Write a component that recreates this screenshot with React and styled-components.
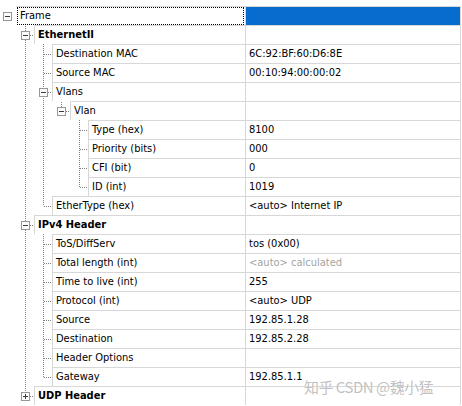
import React from 'react';
import styled, { createGlobalStyle } from 'styled-components';

const GlobalStyle = createGlobalStyle`
  html, body {
    margin: 0;
    padding: 0;
    background: #fff;
  }
  body {
    font-family: "DejaVu Sans Condensed", "DejaVu Sans", "Liberation Sans", sans-serif;
    font-size: 11px;
    color: #000;
  }
`;

const ROW_H = 19;
const STEP = 18;
const DOT = '#7f7f7f';
const GRID = '#d7d7d7';

const rows = [
  { level: 0, label: 'Frame', open: true, selected: true },
  { level: 1, label: 'EthernetII', open: true, bold: true },
  { level: 2, label: 'Destination MAC', value: '6C:92:BF:60:D6:8E' },
  { level: 2, label: 'Source MAC', value: '00:10:94:00:00:02' },
  { level: 2, label: 'Vlans', open: true },
  { level: 3, label: 'Vlan', open: true },
  { level: 4, label: 'Type (hex)', value: '8100' },
  { level: 4, label: 'Priority (bits)', value: '000' },
  { level: 4, label: 'CFI (bit)', value: '0' },
  { level: 4, label: 'ID (int)', value: '1019' },
  { level: 2, label: 'EtherType (hex)', value: '<auto> Internet IP' },
  { level: 1, label: 'IPv4 Header', open: true, bold: true },
  { level: 2, label: 'ToS/DiffServ', value: 'tos (0x00)' },
  { level: 2, label: 'Total length (int)', value: '<auto> calculated', muted: true },
  { level: 2, label: 'Time to live (int)', value: '255' },
  { level: 2, label: 'Protocol (int)', value: '<auto> UDP' },
  { level: 2, label: 'Source', value: '192.85.1.28' },
  { level: 2, label: 'Destination', value: '192.85.2.28' },
  { level: 2, label: 'Header Options', value: '' },
  { level: 2, label: 'Gateway', value: '192.85.1.1' },
  { level: 1, label: 'UDP Header', open: false, bold: true, branch: true },
];

// does row i have a later sibling on the same level
function hasNext(i) {
  const lv = rows[i].level;
  for (let j = i + 1; j < rows.length; j++) {
    if (rows[j].level < lv) return false;
    if (rows[j].level === lv) return true;
  }
  return false;
}

function ancestorOf(i, lv) {
  for (let j = i - 1; j >= 0; j--) {
    if (rows[j].level === lv) return j;
  }
  return -1;
}

const Grid = styled.div`
  position: relative;
  width: 461px;
  padding-top: 6px;
`;

const Row = styled.div`
  display: grid;
  grid-template-columns: 245px 216px;
  height: ${ROW_H}px;
`;

const TreePart = styled.div`
  display: flex;
  min-width: 0;
`;

const Label = styled.div`
  position: relative;
  flex: 1;
  min-width: 0;
  box-sizing: border-box;
  border-top: 1px solid ${GRID};
  border-left: 1px solid ${GRID};
  padding-left: 3px;
  line-height: 18px;
  white-space: nowrap;
  font-weight: ${(p) => (p.$bold ? 700 : 400)};

  ${(p) =>
    p.$selected &&
    `
    border-left-color: transparent;
    &::after {
      content: '';
      position: absolute;
      left: 0;
      top: 0;
      right: 1px;
      bottom: 0;
      border: 1px dotted #000;
    }
  `}
`;

const Value = styled.div`
  box-sizing: border-box;
  border-top: 1px solid ${GRID};
  border-left: 1px solid ${GRID};
  border-right: 1px solid ${GRID};
  padding-left: 3px;
  line-height: 18px;
  white-space: nowrap;
  overflow: hidden;
  color: ${(p) => (p.$muted ? '#a3a3a3' : '#000')};
  background: ${(p) => (p.$selected ? '#066dcf' : 'transparent')};
`;

const Watermark = styled.div`
  position: absolute;
  left: 304px;
  top: 376px;
  font-family: "Noto Sans CJK SC", "DejaVu Sans", sans-serif;
  font-size: 15px;
  letter-spacing: -0.5px;
  color: rgba(140, 140, 140, 0.55);
  text-shadow: 0 0 1px rgba(255, 255, 255, 0.9);
  white-space: nowrap;
  pointer-events: none;
`;

function GutterCell({ width, vFull, vTop, vBottom, hLine, toggle, phase }) {
  return (
    <svg width={width} height={ROW_H} style={{ display: 'block', flex: 'none' }}>
      <g stroke={DOT} strokeWidth="1" strokeDasharray="1 1" strokeDashoffset={phase} shapeRendering="crispEdges">
        {vFull && <line x1="7.5" y1="0" x2="7.5" y2={ROW_H} />}
        {vTop && <line x1="7.5" y1="0" x2="7.5" y2="10" />}
        {vBottom && <line x1="7.5" y1="10" x2="7.5" y2={ROW_H} />}
      </g>
      {hLine && (
        <line x1="8" y1="10.5" x2={width} y2="10.5" stroke={DOT} strokeDasharray="1 1" shapeRendering="crispEdges" />
      )}
      {toggle && (
        <g shapeRendering="crispEdges">
          <rect x="3.5" y="6.5" width="8" height="8" fill="#fbfbfb" stroke="#979797" />
          <line x1="5" y1="10.5" x2="10" y2="10.5" stroke="#3a3a3a" />
          {toggle === 'plus' && <line x1="7.5" y1="8" x2="7.5" y2="13" stroke="#3a3a3a" />}
        </g>
      )}
    </svg>
  );
}

function TreeRow({ row, index }) {
  const cells = [];
  const phase = (index * ROW_H) % 2;
  for (let a = 0; a < row.level; a++) {
    const anc = ancestorOf(index, a);
    cells.push(<GutterCell key={a} width={STEP} vFull={a > 0 && anc >= 0 && hasNext(anc)} phase={phase} />);
  }
  const isParent = row.open !== undefined;
  cells.push(
    <GutterCell
      key="own"
      width={STEP - 2}
      vTop={row.level > 0}
      vBottom={row.level > 0 && hasNext(index)}
      hLine={row.level > 0}
      toggle={isParent ? (row.open ? 'minus' : 'plus') : null}
      phase={phase}
    />
  );

  return (
    <Row>
      <TreePart>
        {cells}
        <Label $bold={row.bold} $selected={row.selected}>
          {row.label}
        </Label>
      </TreePart>
      <Value $selected={row.selected} $muted={row.muted}>
        {row.value}
      </Value>
    </Row>
  );
}

export default function App() {
  return (
    <>
      <GlobalStyle />
      <Grid>
        {rows.map((row, i) => (
          <TreeRow key={i} row={row} index={i} />
        ))}
        <Watermark>知乎 CSDN @魏小猛</Watermark>
      </Grid>
    </>
  );
}
